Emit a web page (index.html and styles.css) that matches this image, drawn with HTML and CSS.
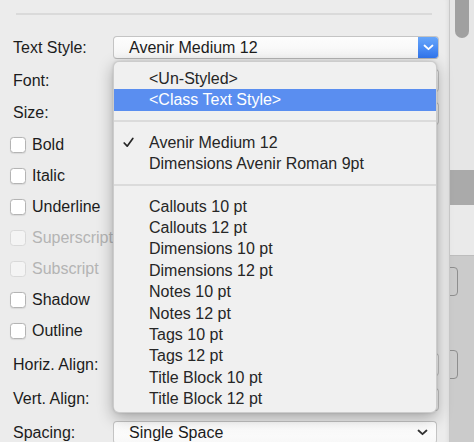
FILE: index.html
```html
<!DOCTYPE html>
<html>
<head>
<meta charset="utf-8">
<link rel="stylesheet" href="styles.css">
</head>
<body>
<div class="window">
  <main class="panel">
    <div class="rule"></div>
    <div class="form">
      <div class="label">Text Style:</div>
      <div class="popup"><span class="value">Avenir Medium 12</span><span class="stepper"><svg width="11" height="7" viewBox="0 0 11 7"><path d="M1.5 1.5 L5.5 5.2 L9.5 1.5" fill="none" stroke="#fff" stroke-width="1.8" stroke-linecap="round" stroke-linejoin="round"/></svg></span></div>

      <div class="label">Font:</div>
      <div class="popup plain"></div>

      <div class="label">Size:</div>
      <div class="popup plain"></div>

      <label class="check"><span class="box"></span>Bold</label>
      <label class="check"><span class="box"></span>Italic</label>
      <label class="check"><span class="box"></span>Underline</label>
      <label class="check disabled"><span class="box"></span>Superscript</label>
      <label class="check disabled"><span class="box"></span>Subscript</label>
      <label class="check"><span class="box"></span>Shadow</label>
      <label class="check"><span class="box"></span>Outline</label>

      <div class="label">Horiz. Align:</div>
      <div class="popup plain"></div>

      <div class="label">Vert. Align:</div>
      <div class="popup plain"></div>

      <div class="label">Spacing:</div>
      <div class="popup plain spacing"><span class="value">Single Space</span><svg class="chev" width="11" height="7" viewBox="0 0 11 7"><path d="M1.5 1.5 L5.5 5.2 L9.5 1.5" fill="none" stroke="#333" stroke-width="1.8" stroke-linecap="round" stroke-linejoin="round"/></svg></div>
    </div>

    <div class="menu">
      <div class="item">&lt;Un-Styled&gt;</div>
      <div class="item selected">&lt;Class Text Style&gt;</div>
      <div class="sep"></div>
      <div class="item checked"><svg class="tick" width="11" height="11" viewBox="0 0 11 11"><path d="M1.2 6 L4.2 9.2 L9.8 1.5" fill="none" stroke="#262626" stroke-width="1.7" stroke-linecap="round" stroke-linejoin="round"/></svg>Avenir Medium 12</div>
      <div class="item">Dimensions Avenir Roman 9pt</div>
      <div class="sep"></div>
      <div class="item">Callouts 10 pt</div>
      <div class="item">Callouts 12 pt</div>
      <div class="item">Dimensions 10 pt</div>
      <div class="item">Dimensions 12 pt</div>
      <div class="item">Notes 10 pt</div>
      <div class="item">Notes 12 pt</div>
      <div class="item">Tags 10 pt</div>
      <div class="item">Tags 12 pt</div>
      <div class="item">Title Block 10 pt</div>
      <div class="item">Title Block 12 pt</div>
    </div>
  </main>
  <aside class="side">
    <div class="track"><div class="thumb"></div></div>
    <div class="band"></div>
    <div class="light"></div>
    <div class="lower">
      <div class="stub"></div>
      <div class="stub"></div>
    </div>
  </aside>
</div>
</body>
</html>
```

FILE: styles.css
```css
html, body {
  margin: 0;
  padding: 0;
}
body {
  background: #ececec;
  font-family: "Liberation Sans", Arial, sans-serif;
  font-size: 16px;
  color: #1c1c1c;
}
.window {
  display: flex;
  width: 474px;
  height: 442px;
  overflow: hidden;
}
.panel {
  position: relative;
  width: 449px;
  flex: none;
  background: #ececec;
  border-right: 1px solid #c9c9c9;
  box-shadow: inset -4px 0 4px -3px rgba(0,0,0,0.07);
}
.rule {
  margin: 13px 17px 0 16px;
  height: 2px;
  background: #dadada;
}
.form {
  margin-top: 16px;
  padding-left: 10px;
  display: grid;
  grid-template-columns: 103px 326px;
  grid-template-rows: 33px 33px 32px 31px 31px 31px 31px 31px 31px 32px 35px 34px 33px 35px;
  align-items: center;
}
.label {
  padding-left: 3px;
  white-space: nowrap;
}
.popup {
  box-sizing: border-box;
  height: 23px;
  border: 1px solid #c4c4c4;
  border-bottom-color: #b5b5b5;
  border-radius: 4px;
  background: linear-gradient(#fdfdfd, #f5f5f5);
  display: flex;
  align-items: center;
  position: relative;
  overflow: hidden;
}
.popup .value {
  padding-left: 15px;
  flex: 1;
}
.stepper {
  width: 21px;
  align-self: stretch;
  margin: -1px -1px -1px 0;
  border-radius: 0 4px 4px 0;
  background: linear-gradient(#6aa8fa, #2f74ee);
  display: flex;
  align-items: center;
  justify-content: center;
}
.spacing {
  width: 324px;
  align-self: start;
  margin-top: 5px;
  background: linear-gradient(#ffffff, #f8f8f8);
}
.chev {
  margin-right: 8px;
}
.check {
  grid-column: 1 / -1;
  display: flex;
  align-items: center;
  white-space: nowrap;
}
.box {
  box-sizing: border-box;
  width: 16px;
  height: 16px;
  margin-right: 6px;
  border: 1px solid #b4b4b4;
  border-radius: 3.5px;
  background: #fff;
  box-shadow: 0 0.5px 1px rgba(0,0,0,0.08);
}
.check.disabled {
  color: #b4b4b4;
}
.check.disabled .box {
  background: #f4f4f4;
  border-color: #d9d9d9;
  box-shadow: none;
}
.menu {
  position: absolute;
  left: 113px;
  top: 61px;
  width: 324px;
  height: 352px;
  box-sizing: border-box;
  padding: 6px 0 4px;
  background: #f0f0f0;
  border: 1px solid rgba(0,0,0,0.15);
  border-radius: 6px;
  box-shadow: 0 5px 16px rgba(0,0,0,0.3), 0 0 3px rgba(0,0,0,0.12);
  color: #262626;
}
.item {
  position: relative;
  height: 21.4px;
  line-height: 21.4px;
  padding-left: 35px;
  white-space: nowrap;
}
.item.selected {
  background: #5a8ef0;
  color: #fff;
}
.tick {
  position: absolute;
  left: 9px;
  top: 5px;
}
.sep {
  height: 21px;
  display: flex;
  align-items: center;
}
.sep::before {
  content: "";
  display: block;
  width: 100%;
  height: 2px;
  background: #dbdbdb;
}
.side {
  flex: 1;
  display: flex;
  flex-direction: column;
  background: #cbcbcb;
}
.track {
  height: 170px;
  background: #e6e6e6;
  padding-left: 5px;
}
.thumb {
  width: 14px;
  height: 38px;
  background: #a0a0a0;
  border-radius: 0 0 7px 7px;
}
.band {
  height: 35px;
  background: #aaaaaa;
}
.light {
  height: 50px;
  background: #eaeaea;
  border-bottom: 1px solid #bdbdbd;
}
.lower {
  flex: 1;
  padding-top: 11px;
}
.stub {
  box-sizing: border-box;
  width: 14px;
  height: 29px;
  margin-left: -6px;
  margin-bottom: 54px;
  border: 1px solid #8e8e8e;
  border-radius: 4px;
}
```
